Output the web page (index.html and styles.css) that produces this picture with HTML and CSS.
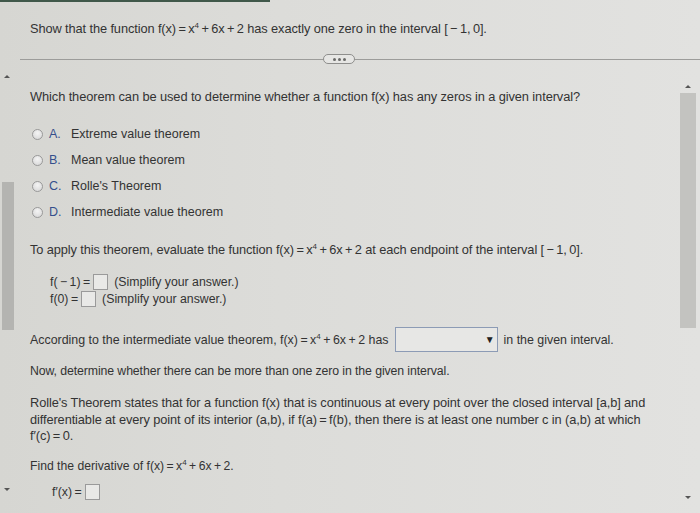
FILE: index.html
```html
<!DOCTYPE html>
<html>
<head>
<meta charset="utf-8">
<link rel="stylesheet" href="styles.css">
</head>
<body>
<div class="topstrip"></div>
<header class="head">
  <p class="head-text">Show that the function f(x)&thinsp;=&thinsp;x<sup>4</sup>&thinsp;+&thinsp;6x&thinsp;+&thinsp;2 has exactly one zero in the interval [&thinsp;−&thinsp;1,&thinsp;0].</p>
  <div class="rule"><span class="pill"><i></i><i></i><i></i></span></div>
</header>
<div class="body-row">
  <aside class="gutter-left">
    <span class="arrow up"></span>
    <span class="thumb-left"></span>
    <span class="arrow down"></span>
  </aside>
  <main class="content">
    <p class="q">Which theorem can be used to determine whether a function f(x) has any zeros in a given interval?</p>
    <ul class="options">
      <li><span class="radio"></span><span class="letter">A.</span><span>Extreme value theorem</span></li>
      <li><span class="radio"></span><span class="letter">B.</span><span>Mean value theorem</span></li>
      <li><span class="radio"></span><span class="letter">C.</span><span>Rolle's Theorem</span></li>
      <li><span class="radio"></span><span class="letter">D.</span><span>Intermediate value theorem</span></li>
    </ul>
    <p class="apply">To apply this theorem, evaluate the function f(x)&thinsp;=&thinsp;x<sup>4</sup>&thinsp;+&thinsp;6x&thinsp;+&thinsp;2 at each endpoint of the interval [&thinsp;−&thinsp;1,&thinsp;0].</p>
    <div class="evals">
      <div class="eval"><span>f(&thinsp;−&thinsp;1)&thinsp;=</span><span class="box"></span><span class="hint">(Simplify your answer.)</span></div>
      <div class="eval"><span>f(0)&thinsp;=</span><span class="box"></span><span class="hint">(Simplify your answer.)</span></div>
    </div>
    <div class="ivt"><span>According to the intermediate value theorem, f(x)&thinsp;=&thinsp;x<sup>4</sup>&thinsp;+&thinsp;6x&thinsp;+&thinsp;2 has</span><span class="select"><span class="tri">▼</span></span><span>in the given interval.</span></div>
    <p class="now">Now, determine whether there can be more than one zero in the given interval.</p>
    <p class="rolle">Rolle's Theorem states that for a function f(x) that is continuous at every point over the closed interval [a,b] and differentiable at every point of its interior (a,b), if f(a)&thinsp;=&thinsp;f(b), then there is at least one number c in (a,b) at which <span class="nw">f′(c)&thinsp;=&thinsp;0.</span></p>
    <p class="find">Find the derivative of f(x)&thinsp;=&thinsp;x<sup>4</sup>&thinsp;+&thinsp;6x&thinsp;+&thinsp;2.</p>
    <div class="deriv"><span>f′(x)&thinsp;=</span><span class="box"></span></div>
  </main>
  <aside class="gutter-right">
    <span class="arrow up"></span>
    <span class="thumb-right"></span>
    <span class="arrow down"></span>
  </aside>
</div>
</body>
</html>
```

FILE: styles.css
```css
* { box-sizing: border-box; }
html, body { margin: 0; padding: 0; }
body {
  width: 700px;
  height: 513px;
  overflow: hidden;
  background: linear-gradient(90deg, #d6d6d2 0%, #dcdcd9 40%, #e2e2e0 100%);
  font-family: "Liberation Sans", Arial, sans-serif;
  font-size: 12.3px;
  color: #333333;
}
p { margin: 0; }
sup { font-size: 8px; vertical-align: 5px; line-height: 0; }
.nw { white-space: nowrap; }

.topstrip { height: 2px; width: 270px; background: #40584a; }

.head { height: 58px; display: flex; flex-direction: column; }
.head-text { padding: 19px 0 0 30px; line-height: 16px; font-size: 12.8px; letter-spacing: -0.1px; }
.rule {
  margin-top: auto;
  margin-left: 20px;
  height: 1px;
  background: #9c9c9a;
  display: flex;
  justify-content: flex-start;
  overflow: visible;
}
.pill {
  margin-left: 303px;
  margin-top: -5px;
  width: 32px; height: 10px;
  border: 1px solid #8e8e8c;
  border-radius: 5px;
  background: #e6e6e4;
  display: flex; align-items: center; justify-content: center; gap: 2px;
}
.pill i { width: 3px; height: 3px; border-radius: 50%; background: #6a6a68; display: block; }

.body-row { display: flex; height: 453px; }

.gutter-left { width: 14px; display: flex; flex-direction: column; align-items: center; }
.gutter-left .up { margin-top: 15px; }
.thumb-left { margin-top: 104px; width: 12px; height: 148px; background: #b4b4b1; margin-left: 1px; }
.gutter-left .down { margin-top: 158px; }

.gutter-right { width: 20px; margin-left: auto; display: flex; flex-direction: column; align-items: center; padding-right: 4px; }
.gutter-right .up { margin-top: 25px; }
.thumb-right { margin-top: 5px; width: 16px; height: 235px; background: #c3c3c0; }
.gutter-right .down { margin-top: 168px; }

.arrow { width: 0; height: 0; border-left: 3px solid transparent; border-right: 3px solid transparent; }
.arrow.up { border-bottom: 3px solid #555; }
.arrow.down { border-top: 3px solid #555; }

.content { padding-left: 16px; width: 666px; }
.q { margin-top: 29px; line-height: 16px; font-size: 12.85px; letter-spacing: -0.1px; }

.options { list-style: none; margin: 16px 0 0; padding: 0 0 0 2px; }
.options li { height: 26px; display: flex; align-items: center; font-size: 12.5px; }
.radio {
  width: 11px; height: 11px; border-radius: 50%;
  border: 1px solid #999;
  background: radial-gradient(circle at 50% 35%, #f4f4f4, #d4d4d4);
}
.letter { color: #354f8c; margin-left: 6px; width: 22px; }

.apply { margin-top: 17px; line-height: 16px; font-size: 12.8px; letter-spacing: -0.1px; }

.evals { margin-top: 15px; padding-left: 20px; }
.eval { height: 17px; display: flex; align-items: center; }
.box { width: 15px; height: 16px; border: 1px solid #9a9a9a; background: #e9e9e7; margin: 0 6px 0 3px; display: inline-block; }

.ivt { margin-top: 20px; height: 25px; display: flex; align-items: center; font-size: 12.4px; }
.select {
  width: 103px; height: 25px;
  border: 1px solid #8c9bb5;
  background: #e7e7e5;
  margin: 0 6px 0 6px;
  display: flex; align-items: center; justify-content: flex-end;
  padding-right: 2px;
}
.tri { font-size: 10px; color: #222; }

.now { margin-top: 11px; line-height: 16px; font-size: 12.3px; letter-spacing: -0.1px; }
.rolle { margin-top: 16px; line-height: 16.5px; font-size: 12.8px; letter-spacing: -0.1px; width: 640px; }
.find { margin-top: 13px; line-height: 16px; font-size: 12.2px; }
.deriv { margin-top: 10px; padding-left: 22px; height: 16px; display: flex; align-items: center; }
.deriv .box { margin-left: 3px; }
```
